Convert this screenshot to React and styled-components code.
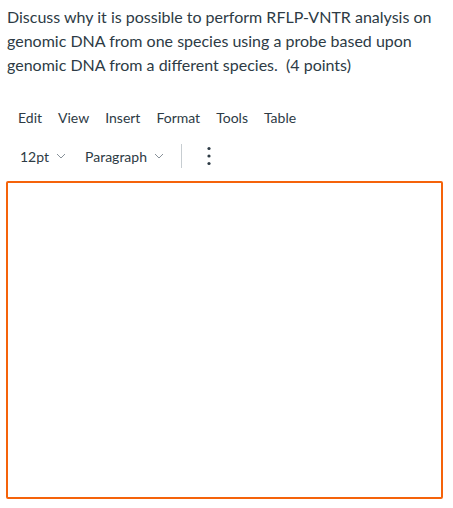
import React from "react";
import styled, { createGlobalStyle } from "styled-components";

const Global = createGlobalStyle`
  html, body { margin: 0; padding: 0; background: #fff; }
  body { font-family: Lato, "Noto Sans", sans-serif; color: #2d3b45; }
`;

const Page = styled.div`
  width: 453px;
  height: 508px;
  padding: 5px 10px 0 6px;
  box-sizing: border-box;
  display: flex;
  flex-direction: column;
`;

const Question = styled.p`
  margin: 0 0 0 1px;
  font-size: 16px;
  line-height: 24px;
  color: #2d3b45;
`;

const MenuBar = styled.div`
  display: flex;
  align-items: center;
  height: 24px;
  margin-top: 28px;
  padding-left: 12px;
  gap: 16px;
`;

const MenuItem = styled.span`
  font-size: 14px;
  color: #2d3b45;
`;

const ToolBar = styled.div`
  display: flex;
  align-items: center;
  height: 26px;
  margin-top: 14px;
  padding-left: 14px;
`;

const Dropdown = styled.span`
  display: flex;
  align-items: center;
  gap: 7px;
  font-size: 14px;
  color: #2d3b45;
  margin-right: ${p => p.$mr}px;
`;

const Sep = styled.span`
  width: 1px;
  height: 24px;
  background: #c7cdd1;
  margin-right: 25px;
`;

const Editor = styled.div`
  margin-top: 12px;
  width: 437px;
  height: 318px;
  box-sizing: border-box;
  border: 2px solid #f5630a;
  border-radius: 2px;
`;

const Chevron = () => (
  <svg width="10" height="6" viewBox="0 0 10 6">
    <path d="M1 1 L5 5 L9 1" fill="none" stroke="#7a858d" strokeWidth="0.9" />
  </svg>
);

const Kebab = () => (
  <svg width="4" height="20" viewBox="0 0 4 20">
    <circle cx="2" cy="2.5" r="1.6" fill="#2d3b45" />
    <circle cx="2" cy="10" r="1.6" fill="#2d3b45" />
    <circle cx="2" cy="17.5" r="1.6" fill="#2d3b45" />
  </svg>
);

export default function App() {
  return (
    <>
      <Global />
      <Page>
        <Question>
          Discuss why it is possible to perform RFLP-VNTR analysis on genomic DNA from one species using a probe based upon genomic DNA from a different species.&nbsp; (4 points)
        </Question>
        <MenuBar>
          {["Edit", "View", "Insert", "Format", "Tools", "Table"].map(m => (
            <MenuItem key={m}>{m}</MenuItem>
          ))}
        </MenuBar>
        <ToolBar>
          <Dropdown $mr={19}>12pt <Chevron /></Dropdown>
          <Dropdown $mr={17}>Paragraph <Chevron /></Dropdown>
          <Sep />
          <Kebab />
        </ToolBar>
        <Editor />
      </Page>
    </>
  );
}
